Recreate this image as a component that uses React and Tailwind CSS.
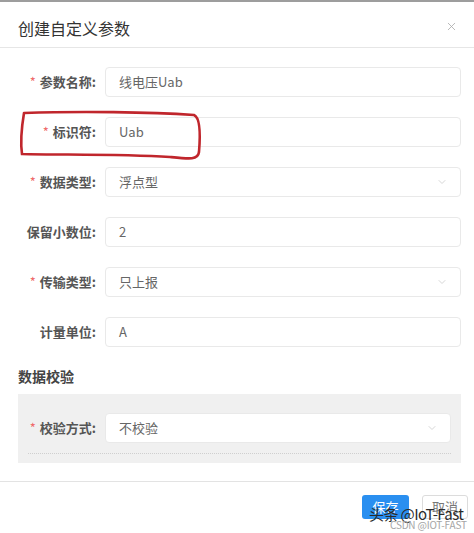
import { X, ChevronDown } from "lucide-react";

const font = { fontFamily: '"Noto Sans CJK SC", "Noto Sans", sans-serif' };

const rows = [
  { label: "参数名称", value: "线电压Uab", required: true },
  { label: "标识符", value: "Uab", required: true },
  { label: "数据类型", value: "浮点型", required: true, select: true },
  { label: "保留小数位", value: "2" },
  { label: "传输类型", value: "只上报", required: true, select: true },
  { label: "计量单位", value: "A" },
];

function Field({ label, value, required, select }) {
  return (
    <div className="flex items-center h-[30px]">
      <div className="w-[97px] shrink-0 text-right text-[13px] font-bold text-[#555] pr-[1px]">
        {required && <span className="text-[#ef6a6a] font-normal mr-[4px]">*</span>}
        {label}:
      </div>
      <div className="ml-[8px] flex-1 h-[30px] flex items-center justify-between border border-[#e9e9e9] rounded-[4px] bg-white pl-[13px] pr-[12px]">
        <span className="text-[13px] text-[#666]">{value}</span>
        {select && <ChevronDown className="w-[12px] h-[12px] text-[#c8c8c8]" strokeWidth={1.5} />}
      </div>
    </div>
  );
}

export default function App() {
  return (
    <div className="relative w-[474px] h-[533px] bg-white overflow-hidden" style={font}>
      <div className="h-[2px] bg-[#9d9d9d]" />

      {/* Header */}
      <div className="h-[46px] flex items-end justify-between pb-[8px] pl-[18px] pr-[16px] border-b border-[#e6e6e6]">
        <span className="text-[16px] leading-[22px] text-[#333]">创建自定义参数</span>
        <X className="w-[13px] h-[13px] text-[#aaa] mb-[6px]" strokeWidth={1.5} />
      </div>

      {/* Form */}
      <div className="pt-[19px] pr-[13px] flex flex-col gap-[20px]">
        {rows.map((r) => (
          <Field key={r.label} {...r} />
        ))}
      </div>

      <div className="mt-[19px] pl-[18px] text-[14px] leading-[20px] font-bold text-[#444]">数据校验</div>

      <div className="mt-[8px] ml-[18px] mr-[13px] h-[69px] bg-[#f0f0f0] pt-[19px] pr-[10px]">
        <div className="-ml-[18px]">
          <Field label="校验方式" value="不校验" required select />
        </div>
        <div className="mt-[10px] ml-[10px] border-t border-dotted border-[#cfcfcf]" />
      </div>

      {/* Footer */}
      <div className="mt-[18px] border-t border-[#e3e3e3] flex justify-end gap-[13px] pt-[13px] pr-[6px]">
        <button className="w-[47px] h-[24px] rounded-[3px] bg-[#2a8ff0] text-white text-[13px]">保存</button>
        <button className="w-[46px] h-[24px] rounded-[3px] border border-[#dcdcdc] bg-white text-[#777] text-[13px]">取消</button>
      </div>

      {/* red hand-drawn mark */}
      <svg className="absolute left-0 top-0 pointer-events-none" width="474" height="533">
        <path
          d="M24 113 C80 111 150 112 194 115 C201 118 200 140 199 152 C198 160 190 159 170 157 C120 154 60 155 22 154 C20 140 22 125 24 113"
          fill="none"
          stroke="#c0262c"
          strokeWidth="2.6"
          strokeLinecap="round"
        />
      </svg>

      {/* watermark */}
      <div className="absolute left-[369px] top-[504px] text-[15px] leading-[20px] text-[#2b2b2b] tracking-[-0.6px]">
        头条 @IoT-Fast
      </div>
      <div className="absolute left-[390px] top-[519px] text-[10px] leading-[11px] text-[#a5a5a5] tracking-[-0.2px]">
        CSDN @IOT-FAST
      </div>
    </div>
  );
}
